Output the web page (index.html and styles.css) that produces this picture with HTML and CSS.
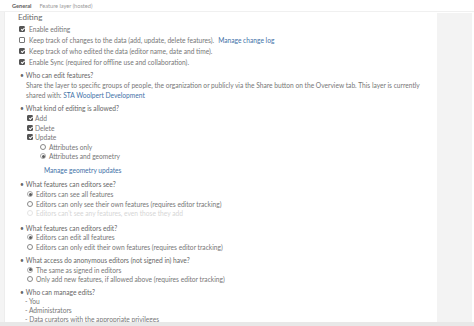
FILE: index.html
```html
<!DOCTYPE html>
<html lang="en">
<head>
    <meta charset="UTF-8">
    <title>Settings - Editing</title>
    <link rel="stylesheet" href="styles.css">
</head>
<body>
    <div class="tabs">
        <span class="tab active">General</span>
        <span class="tab">Feature layer (hosted)</span>
    </div>
    <div class="page">
        <div class="gutter"></div>
        <div class="main">
            <h2>Editing</h2>
            <div class="row"><span class="box on"></span>Enable editing</div>
            <div class="row"><span class="box"></span>Keep track of changes to the data (add, update, delete features). <a class="link gap">Manage change log</a></div>
            <div class="row"><span class="box on"></span>Keep track of who edited the data (editor name, date and time).</div>
            <div class="row"><span class="box on"></span>Enable Sync (required for offline use and collaboration).</div>

            <div class="q first">Who can edit features?</div>
            <div class="note">
                <div>Share the layer to specific groups of people, the organization or publicly via the Share button on the Overview tab. This layer is currently</div>
                <div>shared with: <a class="link">STA Woolpert Development</a></div>
            </div>

            <div class="q">What kind of editing is allowed?</div>
            <div class="sub">
                <div class="row"><span class="box on"></span>Add</div>
                <div class="row"><span class="box on"></span>Delete</div>
                <div class="row"><span class="box on"></span>Update</div>
                <div class="sub">
                    <div class="row"><span class="radio"></span>Attributes only</div>
                    <div class="row"><span class="radio on"></span>Attributes and geometry</div>
                    <a class="link manage">Manage geometry updates</a>
                </div>
            </div>

            <div class="q wide">What features can editors see?</div>
            <div class="sub">
                <div class="row"><span class="radio on"></span>Editors can see all features</div>
                <div class="row"><span class="radio"></span>Editors can only see their own features (requires editor tracking)</div>
                <div class="row off"><span class="radio"></span>Editors can't see any features, even those they add</div>
            </div>

            <div class="q wide">What features can editors edit?</div>
            <div class="sub">
                <div class="row"><span class="radio on"></span>Editors can edit all features</div>
                <div class="row"><span class="radio"></span>Editors can only edit their own features (requires editor tracking)</div>
            </div>

            <div class="q">What access do anonymous editors (not signed in) have?</div>
            <div class="sub">
                <div class="row"><span class="radio on"></span>The same as signed in editors</div>
                <div class="row"><span class="radio"></span>Only add new features, if allowed above (requires editor tracking)</div>
            </div>

            <div class="q first">Who can manage edits?</div>
            <div class="sub list">
                <div>- You</div>
                <div>- Administrators</div>
                <div>- Data curators with the appropriate privileges</div>
            </div>
        </div>
        <div class="aside"></div>
    </div>
    <div class="scrollbar"></div>
</body>
</html>
```
FILE: styles.css
```css
html, body {
    margin: 0;
    height: 100%;
    overflow: hidden;
}

body {
    font-family: Lato, "Open Sans", sans-serif;
    font-size: 6.65px;
    color: #777;
    background: #fff;
    position: relative;
}

.tabs {
    height: 11px;
    display: flex;
    align-items: center;
    padding-left: 12px;
    gap: 8px;
    font-size: 5.6px;
    color: #999;
    border-bottom: 1px solid #f0f0f0;
}

.tab.active {
    color: #5c5c5c;
    font-weight: bold;
}

.page {
    display: flex;
    height: 314px;
}

.gutter {
    width: 4px;
    background: #f4f4f4;
}

.main {
    flex: 1;
    padding-left: 13px;
    overflow: hidden;
    border-left: 1px solid #ededed;
}

.aside {
    width: 35px;
    background: #f3f3f3;
    margin-right: 2px;
    margin-top: 1px;
}

h2 {
    font-size: 8px;
    font-weight: normal;
    color: #6a6a6a;
    margin: 0 0 1.5px;
    line-height: 10px;
}

.row {
    display: flex;
    align-items: center;
    height: 11px;
    white-space: nowrap;
}

.sub > .row {
    height: 9.5px;
}

.box {
    width: 6px;
    height: 6px;
    border: 1px solid #777;
    border-radius: 1px;
    margin: 0 4px 0 1px;
    box-sizing: border-box;
    flex: none;
    position: relative;
}

.sub .box {
    margin: 0 2px 0 0;
}

.box.on {
    background: #555;
    border-color: #555;
}

.box.on::after {
    content: "";
    position: absolute;
    left: 1.6px;
    top: 0.2px;
    width: 1.4px;
    height: 2.8px;
    border: solid #fff;
    border-width: 0 1px 1px 0;
    transform: rotate(45deg);
}

.radio {
    width: 6px;
    height: 6px;
    border: 1px solid #888;
    border-radius: 50%;
    margin: 0 3px 0 0;
    box-sizing: border-box;
    flex: none;
    position: relative;
}

.radio.on {
    border-color: #aaa;
}

.radio.on::after {
    content: "";
    position: absolute;
    left: 0.5px;
    top: 0.5px;
    width: 3px;
    height: 3px;
    border-radius: 50%;
    background: #5a5a5a;
}

.row.off {
    color: #d6d6d6;
}

.row.off .radio {
    border-color: #e4e4e4;
}

.link {
    color: #4272a8;
}

.gap {
    margin-left: 4px;
}

.q {
    margin-top: 3.3px;
    line-height: 10px;
    color: #676767;
    padding-left: 2px;
}

.q.first {
    margin-top: 2.7px;
}

.q.wide {
    margin-top: 4.8px;
}

.q::before {
    content: "\2022";
    margin-right: 2px;
}

.note {
    padding-left: 8px;
    line-height: 10px;
    white-space: nowrap;
}

.sub {
    padding-left: 9px;
}

.sub .sub {
    padding-left: 13px;
}

.manage {
    display: block;
    padding-left: 4px;
    margin-top: 4.6px;
    line-height: 9px;
}

.list {
    line-height: 9.4px;
    padding-left: 7px;
}

.scrollbar {
    position: absolute;
    left: 0;
    right: 0;
    bottom: 0;
    height: 4px;
    background: #e8e8e8;
}
```
